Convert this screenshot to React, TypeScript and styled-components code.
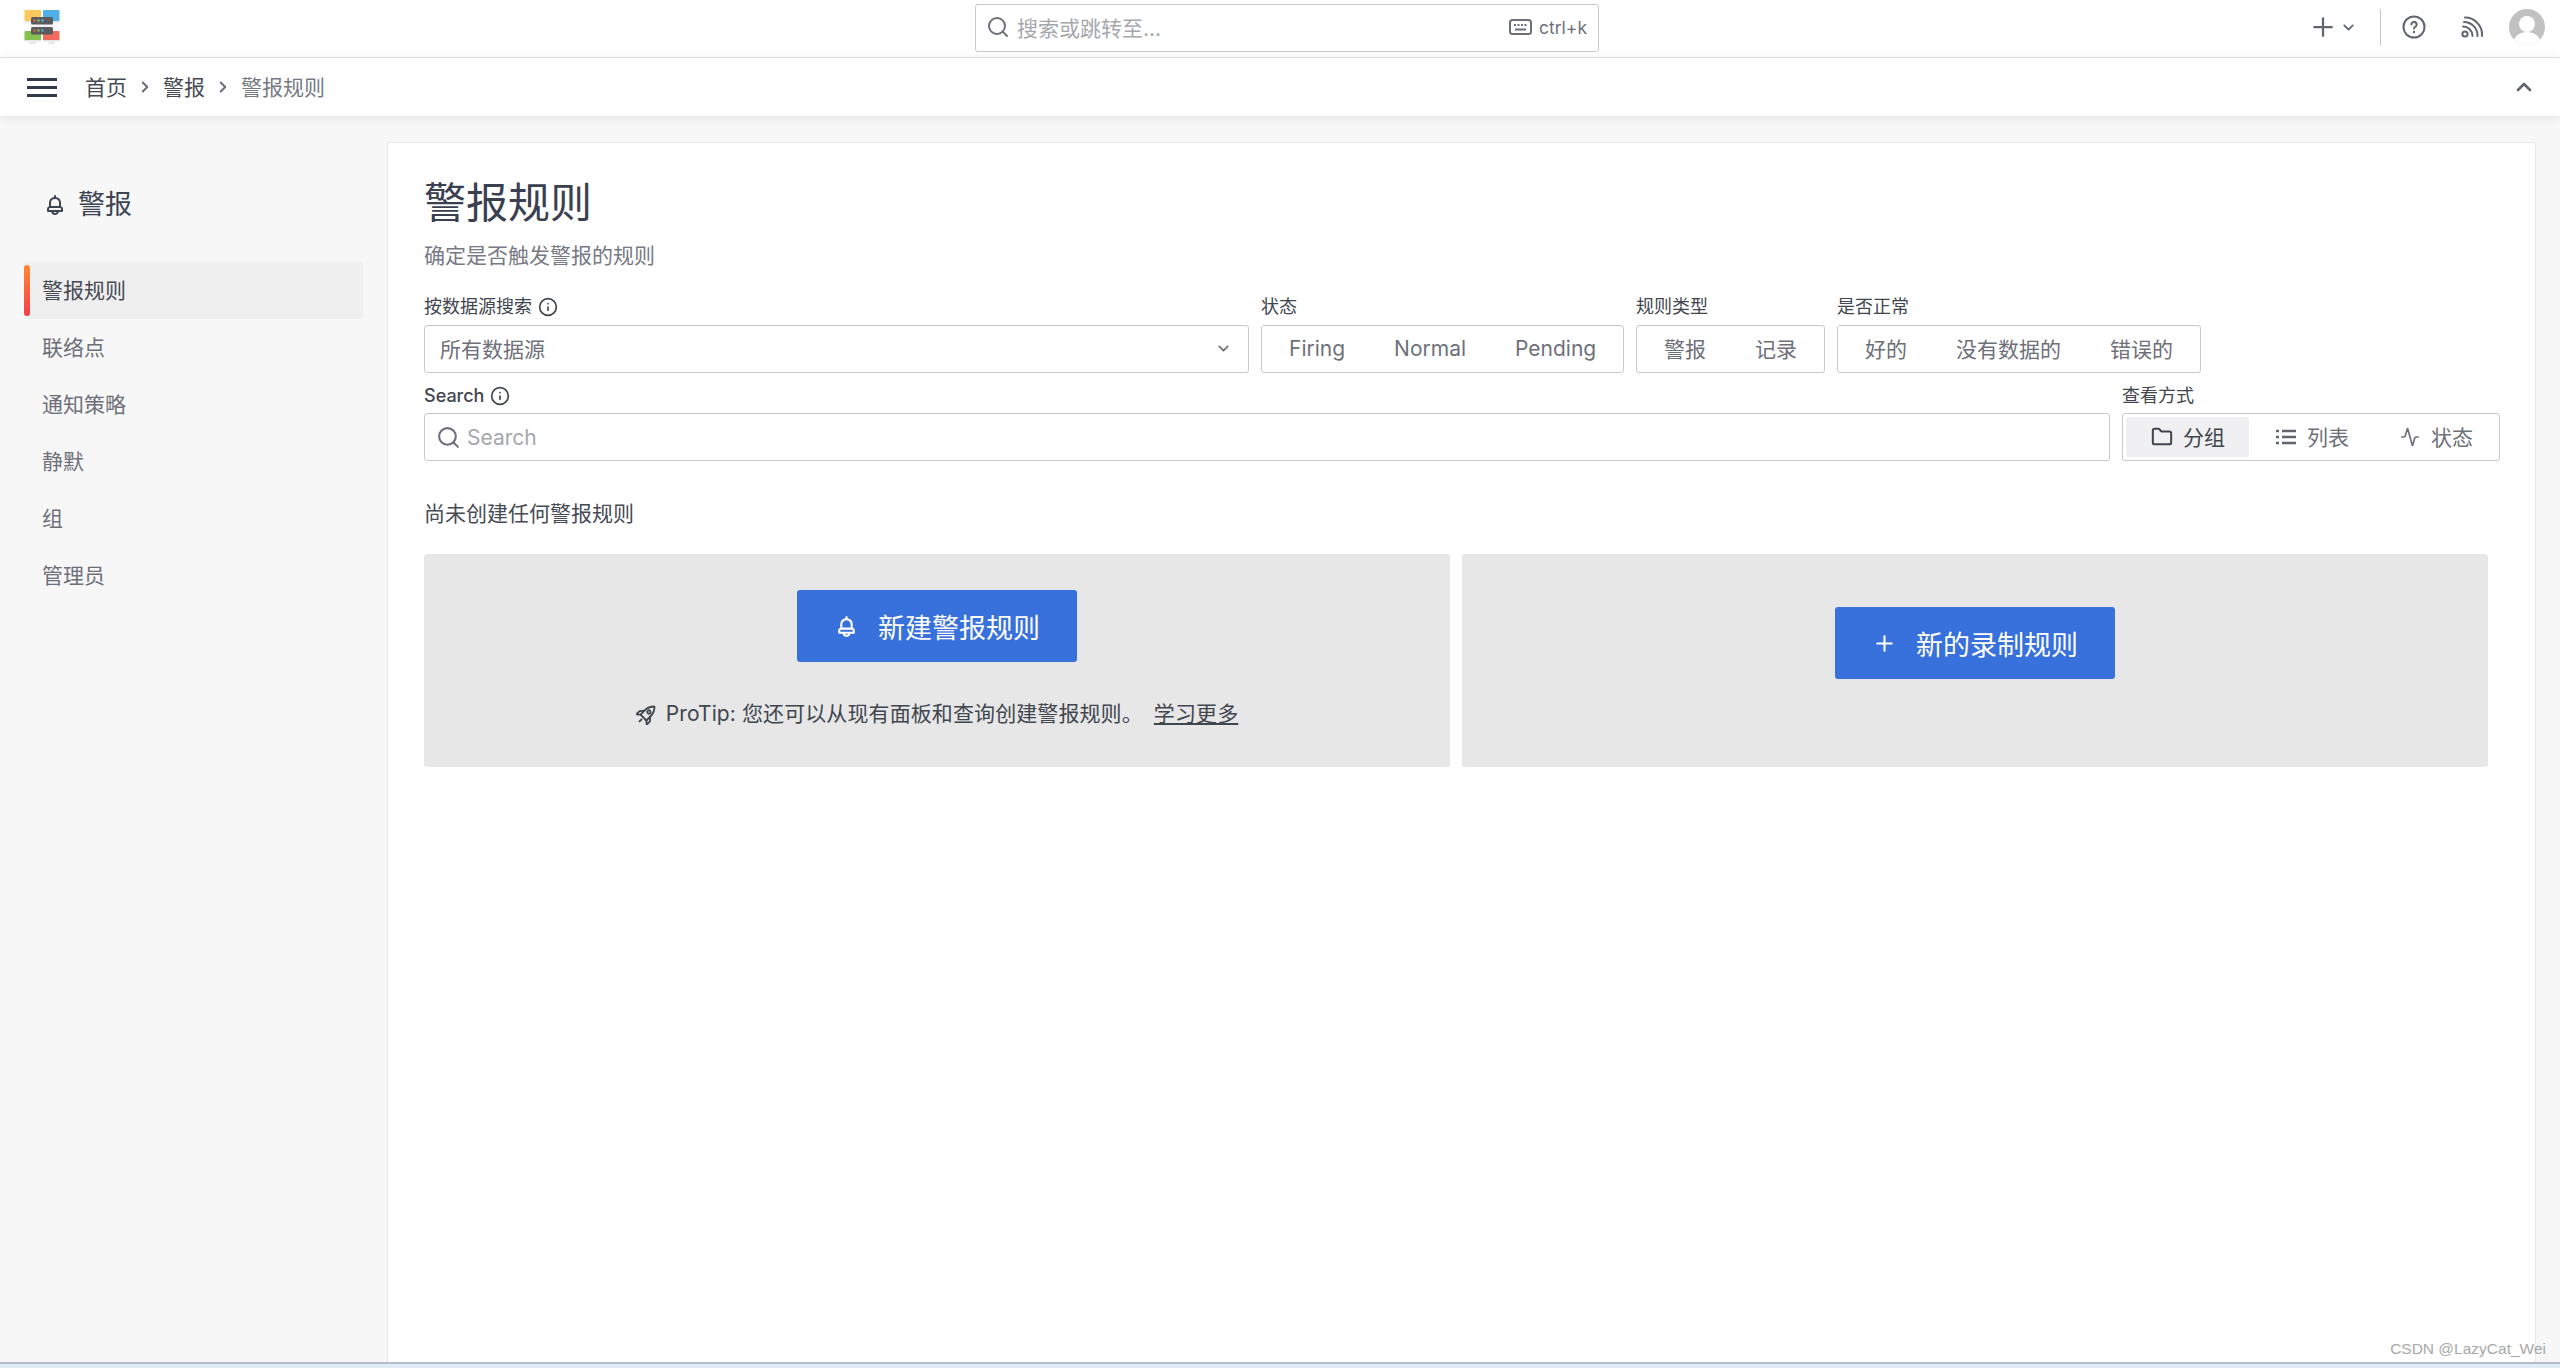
import React from 'react';
import styled, { createGlobalStyle } from 'styled-components';
import { Search, ChevronDown, ChevronUp, ChevronRight, Plus, Folder, Activity, Info } from 'lucide-react';

const Global = createGlobalStyle`
  html, body { margin: 0; padding: 0; height: 100%; background: #f7f7f7; }
  #root { height: 100%; }
  * { box-sizing: border-box; }
  body { font-family: Inter, "Noto Sans CJK SC", "Noto Sans", sans-serif; color: #41454e; font-size: 21px; }
`;

const Page = styled.div`
  position: relative;
  height: 1368px;
  display: flex;
  flex-direction: column;
  overflow: hidden;
`;
const TopBar = styled.header`
  height: 58px;
  flex: none;
  background: #fff;
  border-bottom: 1px solid #e9e9e9;
  display: grid;
  grid-template-columns: 975px 624px 1fr;
  align-items: center;
`;
const LogoBox = styled.div`
  padding-left: 24px;
  display: flex;
  align-items: center;
`;
const TopSearch = styled.div`
  height: 48px;
  margin-top: -1px;
  border: 1px solid #c8c9ce;
  border-radius: 3px;
  display: flex;
  align-items: center;
  padding: 0 11px 2px 10px;
  color: #6e7079;
`;
const TopPlaceholder = styled.span`
  margin-left: 7px;
  flex: 1;
  color: #a5a7ac;
  font-size: 21px;
`;
const Shortcut = styled.span`
  margin-left: 7px;
  font-size: 17.5px;
  color: #6e7079;
`;
const TopActions = styled.div`
  display: flex;
  align-items: center;
  color: #616570;
  padding-left: 709px;
  margin-top: -3px;
  height: 36px;
`;
const MenuChevron = styled.span`
  margin-left: 2px;
  display: flex;
`;
const Divider = styled.span`
  width: 1px;
  height: 36px;
  background: #c4c5c9;
  margin: 0 21px 0 23px;
`;
const RssSlot = styled.span`
  margin-left: 35px;
  display: flex;
`;
const Avatar = styled.span`
  width: 36px;
  height: 36px;
  border-radius: 50%;
  background: #c1c1c1;
  overflow: hidden;
  margin-left: 26px;
  display: block;
`;
const CrumbBar = styled.nav`
  height: 58px;
  flex: none;
  background: #fff;
  box-shadow: 0 1px 10px rgba(0, 0, 0, 0.09);
  display: flex;
  align-items: center;
  padding: 0 24px 0 27px;
  position: relative;
  color: #41454e;
`;
const Burger = styled.span`
  width: 30px;
  height: 19px;
  margin-right: 28px;
  border-top: 3px solid #333b4b;
  border-bottom: 3px solid #333b4b;
  position: relative;
  &::after {
    content: '';
    position: absolute;
    left: 0;
    right: 0;
    top: 5px;
    height: 3px;
    background: #333b4b;
  }
`;
const Crumb = styled.span<{ $muted?: boolean }>`
  font-size: 21px;
  line-height: 27px;
  color: ${p => (p.$muted ? '#777a84' : '#464a53')};
`;
const CrumbSep = styled.span`
  width: 36px;
  display: flex;
  justify-content: center;
  color: #6a6e78;
`;
const CrumbEnd = styled.span`
  margin-left: auto;
  color: #616570;
  display: flex;
`;
const Main = styled.main`
  flex: 1;
  min-height: 0;
  display: flex;
`;
const Side = styled.aside`
  width: 387px;
  flex: none;
  padding: 72px 24px 0 24px;
`;
const SideTitle = styled.div`
  display: flex;
  align-items: center;
  gap: 11px;
  padding-left: 19px;
  font-size: 27px;
  line-height: 34px;
  color: #3d4452;
  margin-bottom: 40px;
`;
const SideItem = styled.div<{ $active?: boolean }>`
  position: relative;
  height: 57px;
  line-height: 57px;
  padding-left: 18px;
  font-size: 21px;
  border-radius: 3px;
  color: ${p => (p.$active ? '#464a53' : '#6e7079')};
  background: ${p => (p.$active ? '#efefef' : 'transparent')};
  ${p =>
    p.$active
      ? `&::before {
    content: '';
    position: absolute;
    left: 0;
    top: 3px;
    bottom: 3px;
    width: 6px;
    border-radius: 3px;
    background: linear-gradient(#ff8833, #f53e4c);
  }`
      : ''}
`;
const Panel = styled.section`
  flex: 1;
  margin: 26px 24px 0 0;
  background: #fff;
  border: 1px solid #e9e9e9;
  border-bottom: none;
  border-radius: 3px 3px 0 0;
  padding: 34px 35px 0 36px;
`;
const Title = styled.h1`
  margin: 0;
  font-size: 42px;
  font-weight: 400;
  line-height: 52px;
  color: #3a4050;
`;
const Subtitle = styled.p`
  margin: 13px 0 27px;
  font-size: 21px;
  line-height: 27px;
  color: #777a84;
`;
const FilterRow = styled.div`
  display: flex;
  gap: 12px;
  margin-bottom: 12px;
`;
const Field = styled.div<{ $grow?: boolean; $w?: number }>`
  ${p => (p.$grow ? 'flex: 1;' : '')}
  ${p => (p.$w ? `width: ${p.$w}px; flex: none;` : '')}
`;
const Label = styled.label<{ $low?: boolean; $medium?: boolean }>`
  display: flex;
  align-items: center;
  gap: 6px;
  height: 22px;
  margin-bottom: ${p => (p.$low ? 6 : 7)}px;
  font-size: 18px;
  line-height: 22px;
  font-weight: ${p => (p.$medium ? 500 : 400)};
  color: #41454e;
  svg { color: #41454e; }
`;
const Select = styled.div`
  height: 48px;
  border: 1px solid #c8c9ce;
  border-radius: 3px;
  display: flex;
  align-items: center;
  justify-content: space-between;
  padding: 0 16px 2px 15px;
  color: #6e7079;
`;
const Input = styled.div`
  height: 48px;
  border: 1px solid #c8c9ce;
  border-radius: 3px;
  display: flex;
  align-items: center;
  gap: 6px;
  padding: 0 11px;
  color: #6e7079;
`;
const Placeholder = styled.span`
  color: #a5a7ac;
  font-size: 21px;
`;
const Radio = styled.div<{ $view?: boolean }>`
  height: 48px;
  border: 1px solid #c8c9ce;
  border-radius: 3px;
  padding: ${p => (p.$view ? '3px 2px 3px 3px' : '3px')};
  display: flex;
  gap: 1px;
`;
const RadioItem = styled.div<{ $active?: boolean }>`
  display: flex;
  align-items: center;
  gap: 9px;
  padding: 0 24px 2px;
  border-radius: 3px;
  font-size: 21px;
  color: ${p => (p.$active ? '#41454e' : '#6e7079')};
  background: ${p => (p.$active ? '#f0f0f2' : 'transparent')};
`;
const IconSlot = styled.span`
  width: 24px;
  height: 24px;
  margin-top: 2px;
  display: flex;
  align-items: center;
  justify-content: center;
`;
const EmptyText = styled.p`
  margin: 39px 0 27px;
  font-size: 21px;
  line-height: 27px;
  color: #464a53;
`;
const Cards = styled.div`
  display: grid;
  grid-template-columns: 1fr 1fr;
  gap: 12px;
  padding-right: 12px;
`;
const Card = styled.div<{ $top: number }>`
  height: 213px;
  background: #e7e7e7;
  border-radius: 3px;
  padding-top: ${p => p.$top}px;
  display: flex;
  flex-direction: column;
  align-items: center;
`;
const PrimaryButton = styled.button`
  width: 280px;
  height: 72px;
  border: none;
  border-radius: 3px;
  background: #3871dc;
  color: #fff;
  padding: 0 36px;
  display: flex;
  align-items: center;
  gap: 18px;
  font: inherit;
  font-size: 27px;
  white-space: nowrap;
`;
const ButtonIcon = styled.span`
  width: 27px;
  height: 27px;
  display: flex;
  align-items: center;
  justify-content: center;
`;
const Tip = styled.div`
  margin-top: 38px;
  font-size: 21px;
  line-height: 27px;
  letter-spacing: 0.1px;
  color: #41454e;
  display: flex;
  align-items: center;
  gap: 8px;
`;
const TipLink = styled.a`
  margin-left: 3px;
  text-decoration: underline;
  color: #41454e;
`;
const FooterStrip = styled.div`
  height: 6px;
  flex: none;
  border-top: 2px solid #b4bccb;
  background: #e0ebf8;
`;
const Watermark = styled.span`
  position: absolute;
  right: 14px;
  bottom: 10px;
  font-family: "Liberation Sans", Arial, sans-serif;
  font-size: 15.5px;
  line-height: 18px;
  color: #a8a8a8;
`;

const BellIcon = ({ size = 24 }: { size?: number }) => (
  <svg width={size} height={size} viewBox="0 0 24 24" fill="currentColor">
    <path d="M18,13.18V10a6,6,0,0,0-5-5.91V3a1,1,0,0,0-2,0V4.09A6,6,0,0,0,6,10v3.18A3,3,0,0,0,4,16v2a1,1,0,0,0,1,1H8.14a4,4,0,0,0,7.72,0H19a1,1,0,0,0,1-1V16A3,3,0,0,0,18,13.18ZM8,10a4,4,0,0,1,8,0v3H8Zm4,10a2,2,0,0,1-1.72-1h3.44A2,2,0,0,1,12,20Zm6-3H6V16a1,1,0,0,1,1-1H17a1,1,0,0,1,1,1Z" />
  </svg>
);

const RocketIcon = () => (
  <svg width="22" height="22" viewBox="0 0 24 24" fill="none" stroke="currentColor" strokeWidth="2" strokeLinejoin="round" strokeLinecap="round">
    <g transform="rotate(45 12 12)">
      <path d="M12 0.5C15.6 3.6 16.5 7.6 16.5 11v6.5h-9V11C7.5 7.6 8.4 3.6 12 0.5Z" />
      <path d="M7.5 11.5L4 15.5v5l3.5-3" />
      <path d="M16.5 11.5L20 15.5v5l-3.5-3" />
      <circle cx="12" cy="9" r="1.8" />
      <path d="M12 20.5v3" />
    </g>
  </svg>
);

const Logo = () => (
  <svg width="36" height="36" viewBox="0 0 36 36" style={{ marginTop: -3 }}>
    <rect x="0.5" y="1" width="16.5" height="11" rx="1" fill="#fcc75b" />
    <rect x="19" y="1" width="16.5" height="11" rx="1" fill="#4fb0e6" />
    <rect x="0.5" y="22" width="16.5" height="10" rx="1" fill="#86c04f" />
    <rect x="19" y="22" width="16.5" height="10" rx="1" fill="#f06a5d" />
    <rect x="0.5" y="12" width="16.5" height="2" fill="#e9e9eb" />
    <rect x="19" y="12" width="16.5" height="2" fill="#e9e9eb" />
    <rect x="0.5" y="31" width="16.5" height="1.5" fill="#e6e6e8" />
    <rect x="19" y="31" width="16.5" height="1.5" fill="#e6e6e8" />
    <rect x="5" y="32.5" width="7" height="2.5" fill="#e9e9eb" />
    <rect x="24" y="32.5" width="7" height="2.5" fill="#e9e9eb" />
    <rect x="6" y="15" width="24" height="3.5" fill="#f2f2f2" />
    <rect x="7" y="8" width="22" height="7.5" rx="1.5" fill="#5b5b5f" />
    <rect x="7" y="18" width="22" height="7.5" rx="1.5" fill="#5b5b5f" />
    <circle cx="10.5" cy="11.5" r="1.2" fill="#e0605a" />
    <circle cx="14.5" cy="11.5" r="1.2" fill="#86c04f" />
    <circle cx="18.5" cy="11.5" r="1.2" fill="#4fb0e6" />
    <circle cx="10.5" cy="21.5" r="1.2" fill="#e0605a" />
    <circle cx="14.5" cy="21.5" r="1.2" fill="#86c04f" />
    <circle cx="18.5" cy="21.5" r="1.2" fill="#4fb0e6" />
  </svg>
);

const KeyboardIcon = () => (
  <svg width="23" height="16" viewBox="0 0 23 16" fill="none" stroke="#6e7079">
    <rect x="1" y="1" width="21" height="14" rx="2.5" strokeWidth="2" />
    <path d="M5 6h13" strokeWidth="2" strokeDasharray="2 1.5" />
    <path d="M6 10.5h11" strokeWidth="2" />
  </svg>
);

const HelpIcon = () => (
  <svg width="24" height="24" viewBox="0 0 24 24" fill="none" stroke="currentColor" strokeWidth="2" strokeLinecap="round">
    <circle cx="12" cy="12" r="10.5" />
    <path d="M9.4 9.5a2.6 2.6 0 1 1 3.8 2.3c-.8.4-1.2.9-1.2 1.7" />
    <path d="M12 17v.1" strokeWidth="2.4" />
  </svg>
);

const RssIcon = () => (
  <svg width="22" height="22" viewBox="0 0 22 22" fill="none" stroke="currentColor" strokeWidth="2" strokeLinecap="round">
    <circle cx="4" cy="18" r="2.6" />
    <path d="M2 10.5a9.5 9.5 0 0 1 9.5 9.5" />
    <path d="M3 6a13.5 13.5 0 0 1 13.5 14" />
    <path d="M4 1.6a17 17 0 0 1 17 18.4" />
  </svg>
);

const AvatarFace = () => (
  <svg width="36" height="36" viewBox="0 0 36 36">
    <circle cx="18" cy="15" r="8" fill="#fff" />
    <path d="M4 36c0-8 6-13 14-13s14 5 14 13z" fill="#fff" />
  </svg>
);

const ListIcon = () => (
  <svg width="22" height="18" viewBox="0 0 22 18" fill="none" stroke="#616570" strokeWidth="2.4">
    <path d="M1 3h3M7 3h14M1 9h3M7 9h14M1 15h3M7 15h14" />
  </svg>
);

const sideItems = ['警报规则', '联络点', '通知策略', '静默', '组', '管理员'];

export default function App() {
  return (
    <Page>
      <Global />
      <TopBar>
        <LogoBox><Logo /></LogoBox>
        <TopSearch>
          <Search size={24} strokeWidth={2} />
          <TopPlaceholder>搜索或跳转至...</TopPlaceholder>
          <KeyboardIcon />
          <Shortcut>ctrl+k</Shortcut>
        </TopSearch>
        <TopActions>
          <Plus size={30} strokeWidth={1.8} />
          <MenuChevron><ChevronDown size={17} strokeWidth={2.6} /></MenuChevron>
          <Divider />
          <HelpIcon />
          <RssSlot><RssIcon /></RssSlot>
          <Avatar><AvatarFace /></Avatar>
        </TopActions>
      </TopBar>
      <CrumbBar>
        <Burger />
        <Crumb>首页</Crumb>
        <CrumbSep><ChevronRight size={18} strokeWidth={2.6} /></CrumbSep>
        <Crumb>警报</Crumb>
        <CrumbSep><ChevronRight size={18} strokeWidth={2.6} /></CrumbSep>
        <Crumb $muted>警报规则</Crumb>
        <CrumbEnd><ChevronUp size={24} strokeWidth={2.6} /></CrumbEnd>
      </CrumbBar>
      <Main>
        <Side>
          <SideTitle>
            <BellIcon size={24} />
            <span>警报</span>
          </SideTitle>
          {sideItems.map((t, i) => (
            <SideItem key={t} $active={i === 0}>{t}</SideItem>
          ))}
        </Side>
        <Panel>
          <Title>警报规则</Title>
          <Subtitle>确定是否触发警报的规则</Subtitle>
          <FilterRow>
            <Field $w={825}>
              <Label>按数据源搜索 <Info size={20} strokeWidth={2} /></Label>
              <Select>
                <span>所有数据源</span>
                <ChevronDown size={17} strokeWidth={2.4} />
              </Select>
            </Field>
            <Field $w={363}>
              <Label>状态</Label>
              <Radio>
                <RadioItem>Firing</RadioItem>
                <RadioItem>Normal</RadioItem>
                <RadioItem>Pending</RadioItem>
              </Radio>
            </Field>
            <Field>
              <Label>规则类型</Label>
              <Radio>
                <RadioItem>警报</RadioItem>
                <RadioItem>记录</RadioItem>
              </Radio>
            </Field>
            <Field>
              <Label>是否正常</Label>
              <Radio>
                <RadioItem>好的</RadioItem>
                <RadioItem>没有数据的</RadioItem>
                <RadioItem>错误的</RadioItem>
              </Radio>
            </Field>
          </FilterRow>
          <FilterRow>
            <Field $grow>
              <Label $low $medium>Search <Info size={20} strokeWidth={2} /></Label>
              <Input>
                <Search size={25} strokeWidth={2} />
                <Placeholder>Search</Placeholder>
              </Input>
            </Field>
            <Field>
              <Label $low>查看方式</Label>
              <Radio $view>
                <RadioItem $active><IconSlot><Folder size={22} strokeWidth={2.2} /></IconSlot>分组</RadioItem>
                <RadioItem><IconSlot><ListIcon /></IconSlot>列表</RadioItem>
                <RadioItem><IconSlot><Activity size={20} strokeWidth={2} /></IconSlot>状态</RadioItem>
              </Radio>
            </Field>
          </FilterRow>
          <EmptyText>尚未创建任何警报规则</EmptyText>
          <Cards>
            <Card $top={36}>
              <PrimaryButton>
                <ButtonIcon><BellIcon size={25} /></ButtonIcon>
                新建警报规则
              </PrimaryButton>
              <Tip>
                <RocketIcon />
                <span>ProTip: 您还可以从现有面板和查询创建警报规则。</span>
                <TipLink>学习更多</TipLink>
              </Tip>
            </Card>
            <Card $top={53}>
              <PrimaryButton>
                <ButtonIcon><Plus size={25} strokeWidth={2} /></ButtonIcon>
                新的录制规则
              </PrimaryButton>
            </Card>
          </Cards>
        </Panel>
      </Main>
      <FooterStrip />
      <Watermark>CSDN @LazyCat_Wei</Watermark>
    </Page>
  );
}
